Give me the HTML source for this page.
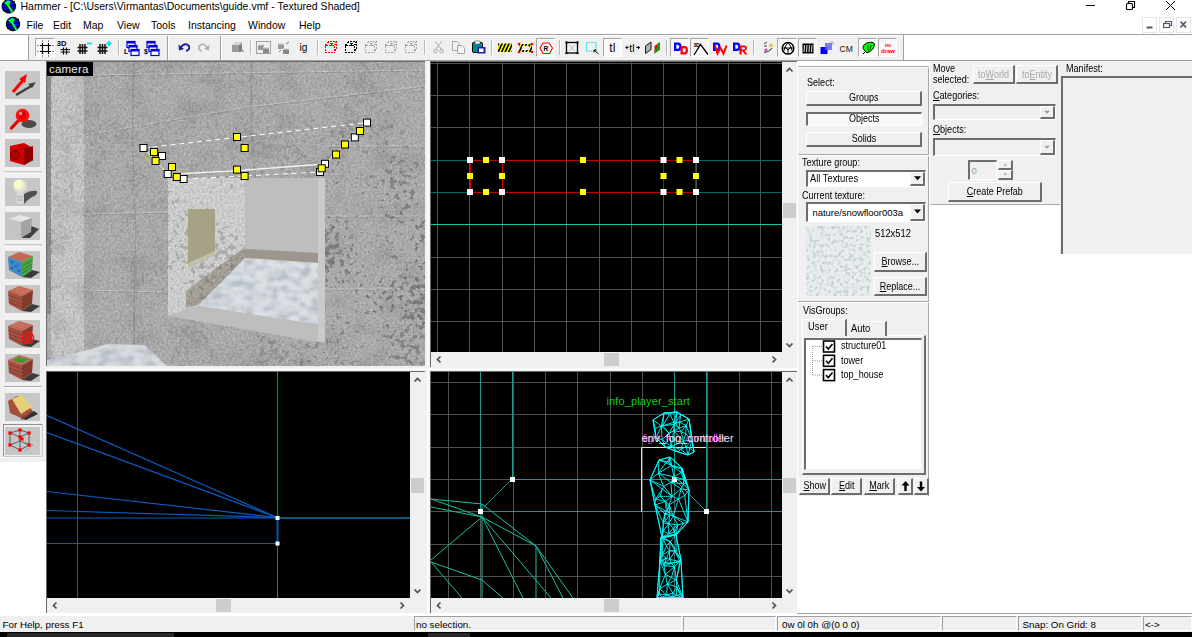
<!DOCTYPE html><html><head><meta charset="utf-8"><style>
html,body{margin:0;padding:0}
body{width:1192px;height:637px;position:relative;overflow:hidden;background:#fff;font-family:"Liberation Sans",sans-serif}
div,svg{box-sizing:border-box}
svg{overflow:visible}
u{text-decoration:underline;text-underline-offset:1px}
</style></head><body>
<div style="position:absolute;left:0px;top:0px;width:1192px;height:34px;background:#fff"></div>
<svg style="position:absolute;left:0;top:0" width="1192" height="637" viewBox="0 0 1192 637"><g transform="translate(8.8,6.3)">
<circle r="6.8" fill="#0000f0" stroke="#000" stroke-width="1"/>
<path d="M-6 -2.5 L6 -5 M-6.5 1.5 L6.5 -1.5 M-6 4.5 L6 2 M-3 6 L5 4.5" stroke="#000" stroke-width="1.1" fill="none"/>
<path d="M-5 -3.5 L-1 -6 L2 -5 L1 -2.5 L-2 -1 Z" fill="#00ff30"/>
<path d="M-1.5 -2.5 L3.5 6" stroke="#00ff30" stroke-width="2.2"/>
</g><g transform="translate(13,24)">
<circle r="6.8" fill="#0000f0" stroke="#000" stroke-width="1"/>
<path d="M-6 -2.5 L6 -5 M-6.5 1.5 L6.5 -1.5 M-6 4.5 L6 2 M-3 6 L5 4.5" stroke="#000" stroke-width="1.1" fill="none"/>
<path d="M-5 -3.5 L-1 -6 L2 -5 L1 -2.5 L-2 -1 Z" fill="#00ff30"/>
<path d="M-1.5 -2.5 L3.5 6" stroke="#00ff30" stroke-width="2.2"/>
</g></svg>
<div style="position:absolute;left:20.5px;top:1.41px;font-size:10.5px;line-height:10.5px;color:#000;white-space:pre;">Hammer - [C:\Users\Virmantas\Documents\guide.vmf - Textured Shaded]</div>
<div style="position:absolute;left:26.5px;top:19.71px;font-size:10.5px;line-height:10.5px;color:#000;white-space:pre;">File</div>
<div style="position:absolute;left:53px;top:19.71px;font-size:10.5px;line-height:10.5px;color:#000;white-space:pre;">Edit</div>
<div style="position:absolute;left:83px;top:19.71px;font-size:10.5px;line-height:10.5px;color:#000;white-space:pre;">Map</div>
<div style="position:absolute;left:117px;top:19.71px;font-size:10.5px;line-height:10.5px;color:#000;white-space:pre;">View</div>
<div style="position:absolute;left:151px;top:19.71px;font-size:10.5px;line-height:10.5px;color:#000;white-space:pre;">Tools</div>
<div style="position:absolute;left:188px;top:19.71px;font-size:10.5px;line-height:10.5px;color:#000;white-space:pre;">Instancing</div>
<div style="position:absolute;left:248px;top:19.71px;font-size:10.5px;line-height:10.5px;color:#000;white-space:pre;">Window</div>
<div style="position:absolute;left:299px;top:19.71px;font-size:10.5px;line-height:10.5px;color:#000;white-space:pre;">Help</div>
<svg style="position:absolute;left:0;top:0" width="1192" height="637" viewBox="0 0 1192 637"><path d="M1086 5.5 H1095" stroke="#000" stroke-width="1"/><rect x="1126.5" y="3.5" width="6" height="6" fill="none" stroke="#000" stroke-width="1.1" rx="1"/><path d="M1128.5 3.5 V1.5 H1134.5 V7.5 H1132.5" fill="none" stroke="#000" stroke-width="1.1"/><path d="M1166 1 L1175 10 M1175 1 L1166 10" stroke="#000" stroke-width="1"/></svg>
<div style="position:absolute;left:1142px;top:17px;width:15px;height:16px;border:1px solid #e6e6e6;background:#fff"></div>
<div style="position:absolute;left:1159px;top:17px;width:15px;height:16px;border:1px solid #e6e6e6;background:#fff"></div>
<div style="position:absolute;left:1176px;top:17px;width:15px;height:16px;border:1px solid #e6e6e6;background:#fff"></div>
<svg style="position:absolute;left:0;top:0" width="1192" height="637" viewBox="0 0 1192 637"><path d="M1146.5 27.5 H1152.5" stroke="#4d5b6e" stroke-width="2"/><rect x="1163.5" y="23.5" width="6" height="4" fill="none" stroke="#4d5b6e" stroke-width="1.2"/><path d="M1165.5 23.5 V21.5 H1171.5 V25.5 H1169.5" fill="none" stroke="#4d5b6e" stroke-width="1.2"/><path d="M1180.5 21.5 L1186 27.5 M1186 21.5 L1180.5 27.5" stroke="#4d5b6e" stroke-width="1.8"/></svg>
<div style="position:absolute;left:0px;top:34px;width:1192px;height:1px;background:#a0a0a0"></div>
<div style="position:absolute;left:28px;top:35px;width:1px;height:25px;background:#a0a0a0"></div>
<div style="position:absolute;left:29px;top:36px;width:874px;height:24px;background:#f0f0f0"></div>
<div style="position:absolute;left:903px;top:35px;width:1px;height:25px;background:#a0a0a0"></div>
<div style="position:absolute;left:0px;top:60px;width:1192px;height:1px;background:#a0a0a0"></div>
<div style="position:absolute;left:35px;top:38px;width:19.5px;height:19px;background:#f8f8f8;border-top:1px solid #a8a8a8;border-left:1px solid #a8a8a8;border-right:1px solid #fff;border-bottom:1px solid #fff"></div>
<div style="position:absolute;left:536px;top:38px;width:19px;height:19px;background:#f8f8f8;border-top:1px solid #a8a8a8;border-left:1px solid #a8a8a8;border-right:1px solid #fff;border-bottom:1px solid #fff"></div>
<div style="position:absolute;left:603px;top:38px;width:19px;height:19px;background:#f8f8f8;border-top:1px solid #a8a8a8;border-left:1px solid #a8a8a8;border-right:1px solid #fff;border-bottom:1px solid #fff"></div>
<div style="position:absolute;left:670px;top:38px;width:19px;height:19px;background:#f8f8f8;border-top:1px solid #a8a8a8;border-left:1px solid #a8a8a8;border-right:1px solid #fff;border-bottom:1px solid #fff"></div>
<div style="position:absolute;left:690px;top:38px;width:19px;height:19px;background:#f8f8f8;border-top:1px solid #a8a8a8;border-left:1px solid #a8a8a8;border-right:1px solid #fff;border-bottom:1px solid #fff"></div>
<div style="position:absolute;left:777px;top:38px;width:19.5px;height:19px;background:#f8f8f8;border-top:1px solid #a8a8a8;border-left:1px solid #a8a8a8;border-right:1px solid #fff;border-bottom:1px solid #fff"></div>
<div style="position:absolute;left:798px;top:38px;width:19px;height:19px;background:#f8f8f8;border-top:1px solid #a8a8a8;border-left:1px solid #a8a8a8;border-right:1px solid #fff;border-bottom:1px solid #fff"></div>
<div style="position:absolute;left:858px;top:38px;width:19px;height:19px;background:#f8f8f8;border-top:1px solid #a8a8a8;border-left:1px solid #a8a8a8;border-right:1px solid #fff;border-bottom:1px solid #fff"></div>
<div style="position:absolute;left:878px;top:38px;width:19px;height:19px;background:#f8f8f8;border-top:1px solid #a8a8a8;border-left:1px solid #a8a8a8;border-right:1px solid #fff;border-bottom:1px solid #fff"></div>
<div style="position:absolute;left:117.5px;top:40px;width:2px;height:15px;background:#b8b8b8;border-right:1px solid #fff"></div>
<div style="position:absolute;left:249.5px;top:40px;width:2px;height:15px;background:#b8b8b8;border-right:1px solid #fff"></div>
<div style="position:absolute;left:316.5px;top:40px;width:2px;height:15px;background:#b8b8b8;border-right:1px solid #fff"></div>
<div style="position:absolute;left:424.0px;top:40px;width:2px;height:15px;background:#b8b8b8;border-right:1px solid #fff"></div>
<div style="position:absolute;left:491.0px;top:40px;width:2px;height:15px;background:#b8b8b8;border-right:1px solid #fff"></div>
<div style="position:absolute;left:558.5px;top:40px;width:2px;height:15px;background:#b8b8b8;border-right:1px solid #fff"></div>
<div style="position:absolute;left:666.0px;top:40px;width:2px;height:15px;background:#b8b8b8;border-right:1px solid #fff"></div>
<div style="position:absolute;left:753.0px;top:40px;width:2px;height:15px;background:#b8b8b8;border-right:1px solid #fff"></div>
<div style="position:absolute;left:167.0px;top:36px;width:1px;height:24px;background:#a0a0a0"></div>
<div style="position:absolute;left:168.0px;top:36px;width:1px;height:24px;background:#fff"></div>
<div style="position:absolute;left:220.0px;top:36px;width:1px;height:24px;background:#a0a0a0"></div>
<div style="position:absolute;left:221.0px;top:36px;width:1px;height:24px;background:#fff"></div>
<svg style="position:absolute;left:0;top:0" width="1192" height="637" viewBox="0 0 1192 637"><g stroke="#000" stroke-width="1.2"><path d="M40 45.5 H51 M40 51.5 H51 M42.5 43 V54 M48.5 43 V54"/></g><g fill="#222"><rect x="42" y="40.5" width="1" height="1"/><rect x="48" y="40.5" width="1" height="1"/><rect x="42" y="55.5" width="1" height="1"/><rect x="48" y="55.5" width="1" height="1"/><rect x="37.5" y="45" width="1" height="1"/><rect x="37.5" y="51" width="1" height="1"/><rect x="52.5" y="45" width="1" height="1"/><rect x="52.5" y="51" width="1" height="1"/></g><text x="56.8" y="46.2" font-family="Liberation Sans" font-weight="bold" font-size="7.6" fill="#000" style="-webkit-font-smoothing:antialiased">3D</text><g stroke="#111" stroke-width="1.2"><path d="M60.5 49.5 H70 M60.5 52 H70 M63.5 47.5 V54.5 M66.5 47.5 V54.5"/></g><g stroke="#111" stroke-width="1.5"><path d="M77.5 47.5 H87.5 M77.5 51 H87.5 M80.0 44 V54 M82.5 44 V54 M85.0 44 V54"/></g><g stroke="#111" stroke-width="1.5"><path d="M97.5 47.5 H107.5 M97.5 51 H107.5 M100.0 44 V54 M102.5 44 V54 M105.0 44 V54"/></g><path d="M87 43.5 H92" stroke="#00e8f0" stroke-width="2"/><path d="M106.5 43.5 H111.5 M109 41 V46" stroke="#00e8f0" stroke-width="2"/><rect x="127" y="41.5" width="8" height="6" fill="#fff" stroke="#0000e0" stroke-width="1.2"/><rect x="127" y="41.5" width="8" height="2" fill="#0000e0"/><rect x="129" y="45.5" width="8" height="6" fill="#fff" stroke="#0000e0" stroke-width="1.2"/><rect x="129" y="45.5" width="8" height="2" fill="#0000e0"/><rect x="131" y="49.5" width="8" height="6" fill="#fff" stroke="#0000e0" stroke-width="1.2"/><rect x="131" y="49.5" width="8" height="2" fill="#0000e0"/><text x="124" y="54" font-family="Liberation Sans" font-weight="bold" font-size="7" fill="#000">L</text><rect x="147" y="41.5" width="8" height="6" fill="#fff" stroke="#0000e0" stroke-width="1.2"/><rect x="147" y="41.5" width="8" height="2" fill="#0000e0"/><rect x="149" y="45.5" width="8" height="6" fill="#fff" stroke="#0000e0" stroke-width="1.2"/><rect x="149" y="45.5" width="8" height="2" fill="#0000e0"/><rect x="151" y="49.5" width="8" height="6" fill="#fff" stroke="#0000e0" stroke-width="1.2"/><rect x="151" y="49.5" width="8" height="2" fill="#0000e0"/><text x="144" y="54" font-family="Liberation Sans" font-weight="bold" font-size="7" fill="#000">$</text><path d="M181 47 Q185 42 189 46 Q190 50 186 51" fill="none" stroke="#1a1aa0" stroke-width="1.8"/><path d="M178.5 44.5 L179 50.5 L184 49 Z" fill="#1a1aa0"/><path d="M207 47 Q203 42 199 46 Q198 50 202 51" fill="none" stroke="#b0b0b0" stroke-width="1.6"/><path d="M209.5 44.5 L209 50.5 L204 49 Z" fill="#b0b0b0"/><path d="M232 45 L235 42.5 H242 V50 L239 52 H232 Z" fill="#9a9a9a"/><path d="M232 45 L235 42.5 H242 L239 45 Z" fill="#d8d8d8"/><path d="M239 45 H242 V50 L239 52Z" fill="#7a7a7a"/><path d="M240 51 H244" stroke="#666"/><rect x="256.5" y="41.5" width="14" height="12" fill="none" stroke="#555" stroke-dasharray="1 1"/><rect x="258" y="44" width="6" height="6" fill="#999"/><rect x="263" y="47" width="6" height="6" fill="#888"/><rect x="258" y="44" width="6" height="1.5" fill="#ddd"/><rect x="263" y="47" width="6" height="1.5" fill="#ddd"/><rect x="278" y="43" width="6" height="6" fill="#999"/><rect x="283" y="48" width="6" height="6" fill="#888"/><rect x="278" y="43" width="6" height="1.5" fill="#ddd"/><rect x="283" y="48" width="6" height="1.5" fill="#ddd"/><path d="M286 44 L289 42 M279 52 L281 50" stroke="#777"/><text x="299.5" y="51" font-family="Liberation Sans" font-size="10" fill="#000">ig</text><g fill="none" stroke="#ff0000" stroke-width="1.3" stroke-dasharray="2 1" shape-rendering="crispEdges"><path d="M325.5 45.5 H334.5 V52.5 H325.5 Z M325.5 45.5 L328.5 41.5 H336.5 V49 L334.5 52.5 M334.5 45.5 L336.5 41.5"/><path d="M330 43.5 H333 M331.5 43.5 V46" stroke-dasharray="none"/></g><g fill="none" stroke="#000" stroke-width="1.3" stroke-dasharray="2 1" shape-rendering="crispEdges"><path d="M345.5 45.5 H354.5 V52.5 H345.5 Z M345.5 45.5 L348.5 41.5 H356.5 V49 L354.5 52.5 M354.5 45.5 L356.5 41.5"/><path d="M350 43.5 H353 M351.5 43.5 V46" stroke-dasharray="none"/></g><g fill="none" stroke="#a8a8a8" stroke-width="1.3" stroke-dasharray="2 1" shape-rendering="crispEdges"><path d="M365.5 45.5 H374.5 V52.5 H365.5 Z M365.5 45.5 L368.5 41.5 H376.5 V49 L374.5 52.5 M374.5 45.5 L376.5 41.5"/><path d="M370 43.5 H373 M371.5 43.5 V46" stroke-dasharray="none"/></g><g fill="none" stroke="#a8a8a8" stroke-width="1.3" stroke-dasharray="2 1" shape-rendering="crispEdges"><path d="M385.5 45.5 H394.5 V52.5 H385.5 Z M385.5 45.5 L388.5 41.5 H396.5 V49 L394.5 52.5 M394.5 45.5 L396.5 41.5"/><path d="M390 43.5 H393 M391.5 43.5 V46" stroke-dasharray="none"/></g><g fill="none" stroke="#a8a8a8" stroke-width="1.3" stroke-dasharray="2 1" shape-rendering="crispEdges"><path d="M405.5 45.5 H414.5 V52.5 H405.5 Z M405.5 45.5 L408.5 41.5 H416.5 V49 L414.5 52.5 M414.5 45.5 L416.5 41.5"/><path d="M410 43.5 H413 M411.5 43.5 V46" stroke-dasharray="none"/></g><g fill="none" stroke="#a8a8a8" stroke-width="1"><path d="M435 41 L441 49 M442 41 L436 49"/><circle cx="435.5" cy="51" r="1.8"/><circle cx="441.5" cy="51" r="1.8"/></g><g fill="#f4f4f4" stroke="#a8a8a8" stroke-width="1"><path d="M452.5 41.5 H457 L459 43.5 V50.5 H452.5 Z"/><path d="M457.5 45.5 H462 L464.5 48 V53.5 H457.5 Z"/></g><rect x="472.5" y="42.5" width="10" height="10" rx="1" fill="#008890" stroke="#000" stroke-width="1"/><rect x="475" y="41" width="5" height="3" fill="#fff" stroke="#555" stroke-width="0.6"/><rect x="477.5" y="47" width="8" height="6.5" fill="#2020a0"/><rect x="479" y="48.5" width="4.5" height="3.5" fill="#fff"/><defs><pattern id="hp" width="3.5" height="9" patternUnits="userSpaceOnUse" patternTransform="skewX(-25)"><rect width="3.5" height="9" fill="#ffff00"/><rect width="1.8" height="9" fill="#000"/></pattern></defs><rect x="498" y="43.5" width="14" height="8.5" fill="url(#hp)"/><rect x="519" y="44" width="13" height="8" fill="url(#hp)"/><rect x="522" y="46" width="7" height="4" fill="#e8e8f0"/><g fill="#ff0000"><circle cx="519" cy="44" r="1.3"/><circle cx="532" cy="44" r="1.3"/><circle cx="519" cy="52" r="1.3"/><circle cx="532" cy="52" r="1.3"/></g><path d="M543 43 L549 43 L552.5 48 L549.5 53.5 L543 53.5 L540 48 Z" fill="none" stroke="#ff0000" stroke-width="1.1"/><text x="543.5" y="51.3" font-family="Liberation Sans" font-weight="bold" font-size="6.5" fill="#000">R</text><rect x="566.5" y="42.5" width="11" height="10.5" fill="none" stroke="#000" stroke-width="1.3"/><path d="M569 45 L575 51 M575 45 L569 51" stroke="#c0c0c0"/><g fill="#000"><circle cx="566.5" cy="42.5" r="1.2"/><circle cx="577.5" cy="42.5" r="1.2"/><circle cx="566.5" cy="53" r="1.2"/><circle cx="577.5" cy="53" r="1.2"/></g><rect x="586.5" y="42.5" width="9.5" height="8.5" fill="none" stroke="#00e0f0" stroke-width="1.2" stroke-dasharray="1.2 0.8"/><path d="M594 50 L598.5 54 M594 50 V52.5 M594 50 H596.5" stroke="#000" stroke-width="1"/><text x="609.3" y="52.3" font-family="Liberation Sans" font-size="12" fill="#000">tl</text><text x="629.3" y="51.8" font-family="Liberation Sans" font-size="10.5" fill="#000">tl</text><path d="M628.5 47.5 H625.8 M625.8 47.5 L627.5 45.8 M625.8 47.5 L627.5 49.2 M636.3 47.5 H639.5 M639.5 47.5 L637.8 45.8 M639.5 47.5 L637.8 49.2" stroke="#000" stroke-width="1"/><path d="M645.5 46 L651 42 V49.5 L645.5 53.5 Z" fill="#b0b0b0" stroke="#000" stroke-width="0.9"/><path d="M654.5 46 L660 42 V49.5 L654.5 53.5 Z" fill="#ff0000"/><path d="M654.5 50 L660 46 V49.5 L654.5 53.5 Z M657 44.2 L660 42 V46 L657 48 Z" fill="#10a010"/><path d="M674 42.5 H678.125 Q681.5 42.5 681.5 46.75 Q681.5 51.0 678.125 51.0 H674 Z M676.3 44.7 V48.8 H677.75 Q679.3 48.8 679.3 46.75 Q679.3 44.7 677.75 44.7 Z" fill="#0000ff" fill-rule="evenodd"/><path d="M680.5 46 H684.625 Q688.0 46 688.0 50.25 Q688.0 54.5 684.625 54.5 H680.5 Z M682.8 48.2 V52.3 H684.25 Q685.8 52.3 685.8 50.25 Q685.8 48.2 684.25 48.2 Z" fill="#ff0000" fill-rule="evenodd"/><text x="693.5" y="46.5" font-family="Liberation Sans" font-weight="bold" font-size="5" fill="#000" textLength="6">3D</text><path d="M694 55 L700.5 44.5 L708 54.5" fill="none" stroke="#000" stroke-width="1.3"/><path d="M713 42.5 H717.125 Q720.5 42.5 720.5 46.75 Q720.5 51.0 717.125 51.0 H713 Z M715.3 44.7 V48.8 H716.75 Q718.3 48.8 718.3 46.75 Q718.3 44.7 716.75 44.7 Z" fill="#0000ff" fill-rule="evenodd"/><path d="M715 45.5 L717.5 53.5 L720.5 48 L723.5 53.5 L726.5 45.5" fill="none" stroke="#ff0000" stroke-width="2"/><path d="M733 42.5 H737.125 Q740.5 42.5 740.5 46.75 Q740.5 51.0 737.125 51.0 H733 Z M735.3 44.7 V48.8 H736.75 Q738.3 48.8 738.3 46.75 Q738.3 44.7 736.75 44.7 Z" fill="#0000ff" fill-rule="evenodd"/><path d="M739.5 45.5 H744 Q747 45.5 747 48.3 Q747 50.5 744.5 51 L747.5 54.5 H745 L742.5 51.3 H741.7 V54.5 H739.5 Z M741.7 47.3 V49.6 H743.8 Q745 49.6 745 48.4 Q745 47.3 743.8 47.3 Z" fill="#ff0000" fill-rule="evenodd"/><path d="M764 52 Q768 53 772 48" fill="none" stroke="#444" stroke-width="1.2"/><circle cx="771" cy="45.5" r="1.8" fill="#e0c040"/><circle cx="766" cy="50" r="1.5" fill="#c040c0"/><path d="M764 44 L767 42 M764 46 H767" stroke="#444"/><circle cx="788" cy="48.3" r="5.8" fill="#fff" stroke="#000" stroke-width="1.4"/><path d="M782.5 48 H793.5 M788 42.5 L785 47 L788 50 L791 47 Z M785 47 L783.5 52 M791 47 L792.5 52 M788 50 V54" fill="none" stroke="#000" stroke-width="1"/><rect x="802.5" y="43.5" width="11" height="10" fill="#000"/><path d="M804.5 45 L804 52 M807 45 L806.5 52 M809.5 45 L809 52 M812 45 L811.5 52" stroke="#fff" stroke-width="0.9"/><rect x="820.5" y="47" width="7" height="7" fill="#0000ff"/><rect x="825" y="43" width="7" height="7" fill="#6060ff" opacity="0.8"/><path d="M830 42 H833 V45" stroke="#aaa" fill="none"/><text x="839.5" y="51.5" font-family="Liberation Sans" font-size="8.5" fill="#111">CM</text><path d="M863 54 L866 51 M865 51 Q860 46 867 43 Q873 41 874.5 44 Q874 50 868 52.5 Q866 53 865 51 Z" fill="#00ff00" stroke="#000" stroke-width="1"/><path d="M868 45 V51 M871 45 L870 50" stroke="#000" stroke-width="0.7"/><text x="885" y="47" font-family="Liberation Sans" font-weight="bold" font-size="5" fill="#ff0000">no</text><text x="881" y="53" font-family="Liberation Sans" font-weight="bold" font-size="6" fill="#ff0000">draw</text></svg>
<div style="position:absolute;left:0px;top:61px;width:46px;height:401px;background:#f0f0f0"></div>
<div style="position:absolute;left:46px;top:61px;width:1px;height:401px;background:#fff"></div>
<svg style="position:absolute;left:0;top:0" width="1192" height="637" viewBox="0 0 1192 637"><rect x="5" y="71" width="35" height="28" fill="#c6c6c6"/><rect x="5" y="105" width="35" height="28" fill="#c6c6c6"/><rect x="5" y="139" width="35" height="28" fill="#c6c6c6"/><rect x="5" y="178" width="35" height="28" fill="#c6c6c6"/><rect x="5" y="212" width="35" height="28" fill="#c6c6c6"/><rect x="5" y="251" width="35" height="28" fill="#c6c6c6"/><rect x="5" y="285" width="35" height="28" fill="#c6c6c6"/><rect x="5" y="320" width="35" height="28" fill="#c6c6c6"/><rect x="5" y="354" width="35" height="28" fill="#c6c6c6"/><rect x="5" y="393" width="35" height="28" fill="#c6c6c6"/><rect x="5" y="427" width="35" height="28" fill="#c6c6c6"/><path d="M4 172 H42" stroke="#a8a8a8" stroke-width="1"/><path d="M4 173 H42" stroke="#fff" stroke-width="1"/><path d="M4 245 H42" stroke="#a8a8a8" stroke-width="1"/><path d="M4 246 H42" stroke="#fff" stroke-width="1"/><path d="M4 386.5 H42" stroke="#a8a8a8" stroke-width="1"/><path d="M4 387.5 H42" stroke="#fff" stroke-width="1"/><rect x="3.5" y="424.5" width="39" height="32" fill="none" stroke="#909090" stroke-width="1"/><path d="M3 457 H43 V424" stroke="#fff" fill="none"/><path d="M16 95 L33 85" stroke="#404040" stroke-width="2.5"/><path d="M36 82 L28 84 L32 88 Z" fill="#404040"/><path d="M13 92 L24 79" stroke="#ff0000" stroke-width="3"/><path d="M27 74 L19 79 L25 83 Z" fill="#ff0000"/><ellipse cx="29" cy="124" rx="7.5" ry="4" fill="#4a4a4a"/><path d="M19 120 L11.5 128" stroke="#e00000" stroke-width="3.2" stroke-linecap="round"/><circle cx="22.5" cy="115.5" r="6.8" fill="#ff1010"/><circle cx="22.5" cy="115.5" r="4" fill="#e00000"/><circle cx="20.5" cy="113.5" r="1.8" fill="#ff9090"/><path d="M24 165 L34 160 L26 155 Z" fill="#404040"/><path d="M10 146 L24 143 L33 148 V159 L24 165 L10 161 Z" fill="#d00000"/><path d="M24 149 L33 146 V159 L24 165 Z" fill="#900000"/><circle cx="15" cy="155" r="4.5" fill="#b00000" stroke="#700000"/><path d="M24 194 Q30 190 37 191 Q38 195 32 197 Q27 200 24 204 Z" fill="#505050"/><path d="M16 190 L24 190 L23 196 Q25 199 23 204 L17 204 Q15 199 17 196 Z" fill="#d8d8d8"/><path d="M17 197 H23 M17 200 H23" stroke="#a0a0a0" stroke-width="0.8"/><circle cx="20" cy="186" r="6.8" fill="#e0e0d8"/><circle cx="18.5" cy="184.5" r="4.8" fill="#fafac8"/><path d="M22 238 L31 226 L39 229 L30 238 Z" fill="#404040"/><path d="M9 219 L20 215 L32 218 L21 222 Z" fill="#e6e6e6"/><path d="M9 219 L21 222 L21 238 L10 233 Z" fill="#c4c4c4"/><path d="M21 222 L32 218 L31 232 L21 238 Z" fill="#a4a4a4"/><path d="M22 277 L32 270 L40 272 L31 278 Z" fill="#3a3a3a"/><path d="M8 257 L19 252 L33 256 L22 262 Z" fill="#c46a54"/><path d="M8 257 L22 262 L22 277 L9 270 Z" fill="#3a88c8"/><path d="M22 262 L33 256 L32 270 L22 277 Z" fill="#48a848"/><g fill="#183050" opacity="0.6"><circle cx="12" cy="262" r="1"/><circle cx="16" cy="266" r="1"/><circle cx="12" cy="268" r="1"/><circle cx="19" cy="271" r="1"/></g><g stroke="#206020" stroke-width="0.6"><path d="M22 266 L32.8 260 M22 270 L32.5 264 M22 273.5 L32.2 267"/></g><path d="M22 311 L32 304 L40 306 L31 312 Z" fill="#3a3a3a"/><path d="M8 291 L19 286 L33 290 L22 296 Z" fill="#c46a54"/><path d="M8 291 L22 296 L22 311 L9 304 Z" fill="#a4503e"/><path d="M22 296 L33 290 L32 304 L22 311 Z" fill="#8a3e2e"/><g stroke="#5a2a20" stroke-width="0.6" opacity="0.7"><path d="M8.3 295 L22 300 M8.6 299 L22 304 M8.8 302 L22 307.5 M22 300 L32.8 294 M22 304 L32.5 298 M22 307.5 L32.2 301"/></g><g stroke="#e0a090" stroke-width="0.5" opacity="0.6"><path d="M12 289.5 L26 294 M16 288 L29 292"/></g><path d="M22 346 L32 339 L40 341 L31 347 Z" fill="#3a3a3a"/><path d="M8 326 L19 321 L33 325 L22 331 Z" fill="#c46a54"/><path d="M8 326 L22 331 L22 346 L9 339 Z" fill="#a4503e"/><path d="M22 331 L33 325 L32 339 L22 346 Z" fill="#8a3e2e"/><g stroke="#5a2a20" stroke-width="0.6" opacity="0.7"><path d="M8.3 330 L22 335 M8.6 334 L22 339 M8.8 337 L22 342.5 M22 335 L32.8 329 M22 339 L32.5 333 M22 342.5 L32.2 336"/></g><g stroke="#e0a090" stroke-width="0.5" opacity="0.6"><path d="M12 324.5 L26 329 M16 323 L29 327"/></g><circle cx="28" cy="338" r="5.5" fill="none" stroke="#ff1010" stroke-width="1.6"/><circle cx="28" cy="338" r="2.5" fill="none" stroke="#ff1010" stroke-width="1.4"/><path d="M22 380 L32 373 L40 375 L31 381 Z" fill="#3a3a3a"/><path d="M8 360 L19 355 L33 359 L22 365 Z" fill="#c46a54"/><path d="M8 360 L22 365 L22 380 L9 373 Z" fill="#a4503e"/><path d="M22 365 L33 359 L32 373 L22 380 Z" fill="#8a3e2e"/><g stroke="#5a2a20" stroke-width="0.6" opacity="0.7"><path d="M8.3 364 L22 369 M8.6 368 L22 373 M8.8 371 L22 376.5 M22 369 L32.8 363 M22 373 L32.5 367 M22 376.5 L32.2 370"/></g><g stroke="#e0a090" stroke-width="0.5" opacity="0.6"><path d="M12 358.5 L26 363 M16 357 L29 361"/></g><path d="M12 360 L19 357 L29 359.5 L22 363 Z" fill="#3c9a30"/><path d="M20 418 L34 411 L38 414 L26 420 Z" fill="#303030"/><path d="M8 401 L17 396 L22 399 L32 410 L21 418 L10 413 Z" fill="#a4503e"/><path d="M21 418 L32 410 L33 412 L22 420 Z" fill="#8a3e2e"/><path d="M12 399 L22 395 L32 407 L21 414 Z" fill="#e8d078"/><g fill="none" stroke="#404040" stroke-width="0.8"><path d="M10 433 L20 430 L29 433 L20 437 Z M10 433 V445 L20 450 V437 M29 433 V445 L20 450 M10 445 L20 441 L29 445 M20 430 V441"/></g><path d="M20 441 L33 445 L25 451" fill="none" stroke="#909090" stroke-width="0.8"/><rect x="8.4" y="431.4" width="3.2" height="3.2" fill="#ff0000"/><rect x="18.4" y="428.4" width="3.2" height="3.2" fill="#ff0000"/><rect x="27.4" y="431.4" width="3.2" height="3.2" fill="#ff0000"/><rect x="18.4" y="435.4" width="3.2" height="3.2" fill="#ff0000"/><rect x="8.4" y="443.4" width="3.2" height="3.2" fill="#ff0000"/><rect x="18.4" y="448.4" width="3.2" height="3.2" fill="#ff0000"/><rect x="27.4" y="443.4" width="3.2" height="3.2" fill="#ff0000"/><rect x="20.4" y="437.4" width="3.2" height="3.2" fill="#ff0000"/></svg>
<div style="position:absolute;left:425px;top:61px;width:5px;height:556px;background:#f0f0f0"></div>
<div style="position:absolute;left:427px;top:61px;width:2px;height:556px;background:#fbfbfb"></div>
<div style="position:absolute;left:46px;top:366px;width:751px;height:5px;background:#f0f0f0"></div>
<div style="position:absolute;left:46px;top:368px;width:751px;height:2px;background:#fbfbfb"></div>
<div style="position:absolute;left:46px;top:61px;width:379px;height:305px;background:#a8a8a8;border-left:1px solid #6a6a6a;border-top:1px solid #6a6a6a"></div>
<svg style="position:absolute;left:0;top:0" width="1192" height="637" viewBox="0 0 1192 637"><defs><clipPath id="c3d"><rect x="47" y="62" width="378" height="304"/></clipPath><filter id="spk" x="0" y="0" width="100%" height="100%" color-interpolation-filters="sRGB"><feTurbulence type="fractalNoise" baseFrequency="0.2" numOctaves="3" seed="3" result="n1"/><feTurbulence type="fractalNoise" baseFrequency="0.018" numOctaves="2" seed="11" result="n2"/><feComposite in="n1" in2="n2" operator="arithmetic" k1="0" k2="-10" k3="6" k4="0.9" result="m"/><feColorMatrix in="m" values="0 0 0 0 0.3  0 0 0 0 0.3  0 0 0 0 0.3  0 0 0 1 0"/><feGaussianBlur stdDeviation="0.55"/><feComposite in2="SourceGraphic" operator="in"/></filter><filter id="blt" x="0" y="0" width="100%" height="100%" color-interpolation-filters="sRGB"><feTurbulence type="fractalNoise" baseFrequency="0.04" numOctaves="3" seed="21"/><feColorMatrix values="0 0 0 0 0  0 0 0 0 0  0 0 0 0 0  0 0 0 -3 1.6"/><feComposite in2="SourceGraphic" operator="in"/></filter><radialGradient id="spg" gradientUnits="userSpaceOnUse" cx="385" cy="270" r="170"><stop offset="0" stop-color="#fff"/><stop offset="0.55" stop-color="#bbb"/><stop offset="1" stop-color="#333"/></radialGradient><mask id="spm" maskUnits="userSpaceOnUse" x="47" y="62" width="378" height="304"><rect x="47" y="62" width="378" height="304" fill="url(#spg)"/></mask><filter id="grn" x="0" y="0" width="100%" height="100%" color-interpolation-filters="sRGB"><feTurbulence type="fractalNoise" baseFrequency="0.45" numOctaves="2" seed="9"/><feColorMatrix values="2 0 0 0 -0.5  2 0 0 0 -0.5  2 0 0 0 -0.5  0 0 0 0 0.12"/><feComposite in2="SourceGraphic" operator="in"/></filter><filter id="snf" x="0" y="0" width="100%" height="100%" color-interpolation-filters="sRGB"><feTurbulence type="fractalNoise" baseFrequency="0.09 0.16" numOctaves="3" seed="4"/><feColorMatrix values="0 0 0 0 0.35  0 0 0 0 0.42  0 0 0 0 0.5  0 0 0 -3 1.8"/><feGaussianBlur stdDeviation="0.9"/><feComposite in2="SourceGraphic" operator="in"/></filter></defs><g clip-path="url(#c3d)"><rect x="47" y="62" width="378" height="304" fill="#b1b1b1"/><rect x="47" y="62" width="4" height="252" fill="#909090"/><rect x="47" y="314" width="4" height="52" fill="#b4b4b4"/><rect x="51" y="62" width="33" height="304" fill="#cdcdcd"/><g stroke="#8c8c8c" stroke-width="1" fill="none" opacity="0.6" transform="translate(0,1)"><path d="M84 135 L247 107 L425 86"/><path d="M84 214 L168 212"/><path d="M84 290 L168 292"/><path d="M323 146 L425 146"/><path d="M323 216 L425 216"/><path d="M323 289 L425 289"/><path d="M84 75 L425 70"/></g><g stroke="#cacaca" stroke-width="1" fill="none"><path d="M84 135 L247 107 L425 86"/><path d="M84 214 L168 212"/><path d="M84 290 L168 292"/><path d="M323 146 L425 146"/><path d="M323 216 L425 216"/><path d="M323 289 L425 289"/><path d="M84 75 L425 70"/></g><g stroke="#cacaca" stroke-width="1" fill="none"><path d="M51 95 H84 M51 148 H84 M51 205 H84 M51 283 H84 M51 340 H84"/></g><g mask="url(#spm)"><rect x="84" y="62" width="341" height="304" fill="#606060" filter="url(#spk)" opacity="0.55"/></g><rect x="51" y="62" width="33" height="304" fill="#909090" filter="url(#spk)" opacity="0.12"/><path d="M134 62 Q131 150 136 230 Q133 300 135 366" stroke="#8a8a8a" stroke-width="1.2" fill="none" opacity="0.6"/><path d="M252 62 Q249 120 256 180" stroke="#8a8a8a" stroke-width="1.5" fill="none" opacity="0.5"/><rect x="47" y="62" width="378" height="304" fill="#808080" filter="url(#blt)" opacity="0.08"/><rect x="47" y="62" width="378" height="304" fill="#808080" filter="url(#grn)"/><path d="M168 178 L245 178 L245 258 L198 306 L168 316 Z" fill="#d6d6d6"/><rect x="245" y="178" width="78" height="80" fill="#bebebe"/><path d="M245 249 L320 253 L320 264 L245 260 Z" fill="#9c968c"/><path d="M186 291 L245 247 L245 259 L198 305 L186 308 Z" fill="#aaa49a"/><path d="M168 178 L245 178 L245 258 L198 306 L168 316 Z" fill="#808080" filter="url(#grn)"/><path d="M168 178 L245 178 L245 258 L198 306 L168 316 Z" fill="#606060" filter="url(#spk)" opacity="0.25"/><path d="M188 209 L215 209 L215 255 L188 268 Z" fill="#a6a286"/><path d="M188 263 L215 251 L215 255 L188 268 Z" fill="#c4c0a8"/><path d="M198 306 L245 258 L320 263 L320 325 Z" fill="#dde1e5"/><path d="M198 306 L245 258 L320 263 L320 325 Z" fill="#8090a0" filter="url(#snf)" opacity="0.3"/><path d="M168 316 L198 306 L320 325 L323 343 Z" fill="#bebebe"/><path d="M318 178 L325 178 L325 343 L318 340 Z" fill="#cacaca"/><path d="M47 366 L47 360 L80 352 L108 344 L145 345 L167 366 Z" fill="#d8dce0"/><path d="M47 366 L47 360 L80 352 L108 344 L145 345 L167 366 Z" fill="#8090a0" filter="url(#snf)" opacity="0.3"/></g><path d="M143.5 148 L367 122.6" stroke="#fff" stroke-width="1" stroke-dasharray="5 4"/><path d="M184 179 L244 176 L320 172" stroke="#fff" stroke-width="1" stroke-dasharray="5 4"/><path d="M168 174.5 L237 170.5 L325 164" stroke="#f4f4f4" stroke-width="1.7"/><path d="M143.5 148 L168 174 M367 122.6 L325 164" stroke="#fff" stroke-width="1"/><rect x="140.0" y="144.5" width="7" height="7" fill="#fff" stroke="#000" stroke-width="1"/><rect x="158.5" y="152.5" width="7" height="7" fill="#fff" stroke="#000" stroke-width="1"/><rect x="164.2" y="170.5" width="7" height="7" fill="#fff" stroke="#000" stroke-width="1"/><rect x="180.1" y="175.5" width="7" height="7" fill="#fff" stroke="#000" stroke-width="1"/><rect x="363.5" y="119.1" width="7" height="7" fill="#fff" stroke="#000" stroke-width="1"/><rect x="351.3" y="133.9" width="7" height="7" fill="#fff" stroke="#000" stroke-width="1"/><rect x="321.5" y="160.3" width="7" height="7" fill="#fff" stroke="#000" stroke-width="1"/><rect x="316.5" y="168.5" width="7" height="7" fill="#fff" stroke="#000" stroke-width="1"/><rect x="150.5" y="148.5" width="7" height="7" fill="#ffff00" stroke="#000" stroke-width="1"/><rect x="152.1" y="157.5" width="7" height="7" fill="#ffff00" stroke="#000" stroke-width="1"/><rect x="168.5" y="163.5" width="7" height="7" fill="#ffff00" stroke="#000" stroke-width="1"/><rect x="173.3" y="173.5" width="7" height="7" fill="#ffff00" stroke="#000" stroke-width="1"/><rect x="233.5" y="133.5" width="7" height="7" fill="#ffff00" stroke="#000" stroke-width="1"/><rect x="241.1" y="144.5" width="7" height="7" fill="#ffff00" stroke="#000" stroke-width="1"/><rect x="233.5" y="166.1" width="7" height="7" fill="#ffff00" stroke="#000" stroke-width="1"/><rect x="241.1" y="172.5" width="7" height="7" fill="#ffff00" stroke="#000" stroke-width="1"/><rect x="356.5" y="127.5" width="7" height="7" fill="#ffff00" stroke="#000" stroke-width="1"/><rect x="341.5" y="141.0" width="7" height="7" fill="#ffff00" stroke="#000" stroke-width="1"/><rect x="332.5" y="151.0" width="7" height="7" fill="#ffff00" stroke="#000" stroke-width="1"/><rect x="318.2" y="164.8" width="7" height="7" fill="#ffff00" stroke="#000" stroke-width="1"/></svg>
<div style="position:absolute;left:47px;top:62px;width:46px;height:14px;background:#000"></div>
<div style="position:absolute;left:49px;top:63.48px;font-size:11.6px;line-height:11.6px;color:#e8e8e8;white-space:pre;letter-spacing:0.15px">camera</div>
<div style="position:absolute;left:430px;top:61px;width:367px;height:306px;background:#000;border-left:1px solid #6a6a6a;border-top:1px solid #6a6a6a"></div>
<svg style="position:absolute;left:0;top:0" width="1192" height="637" viewBox="0 0 1192 637"><path d="M437.5 62 V352" stroke="#505050" stroke-width="1"/><path d="M469.5 62 V352" stroke="#505050" stroke-width="1"/><path d="M502.5 62 V352" stroke="#505050" stroke-width="1"/><path d="M534.5 62 V352" stroke="#505050" stroke-width="1"/><path d="M566.5 62 V352" stroke="#505050" stroke-width="1"/><path d="M599.5 62 V352" stroke="#505050" stroke-width="1"/><path d="M631.5 62 V352" stroke="#505050" stroke-width="1"/><path d="M663.5 62 V352" stroke="#505050" stroke-width="1"/><path d="M696.5 62 V352" stroke="#505050" stroke-width="1"/><path d="M728.5 62 V352" stroke="#505050" stroke-width="1"/><path d="M760.5 62 V352" stroke="#505050" stroke-width="1"/><path d="M431 63.5 H782" stroke="#505050" stroke-width="1"/><path d="M431 95.5 H782" stroke="#505050" stroke-width="1"/><path d="M431 127.5 H782" stroke="#505050" stroke-width="1"/><path d="M431 160.5 H782" stroke="#505050" stroke-width="1"/><path d="M431 192.5 H782" stroke="#505050" stroke-width="1"/><path d="M431 224.5 H782" stroke="#505050" stroke-width="1"/><path d="M431 257.5 H782" stroke="#505050" stroke-width="1"/><path d="M431 289.5 H782" stroke="#505050" stroke-width="1"/><path d="M431 321.5 H782" stroke="#505050" stroke-width="1"/><path d="M431 160.5 H782 M431 192.5 H782" stroke="#006868" stroke-width="1"/><path d="M431 224.5 H782" stroke="#20c0b0" stroke-width="1"/><path d="M470 160.5 H696 M470 192.5 H696 M470.5 160 V192 M502.5 160 V192 M663.5 160 V192 M695.5 160 V192" stroke="#c00000" stroke-width="1"/><rect x="467" y="157" width="6" height="6" fill="#fff"/><rect x="467" y="189" width="6" height="6" fill="#fff"/><rect x="499" y="157" width="6" height="6" fill="#fff"/><rect x="499" y="189" width="6" height="6" fill="#fff"/><rect x="660.5" y="157" width="6" height="6" fill="#fff"/><rect x="660.5" y="189" width="6" height="6" fill="#fff"/><rect x="693" y="157" width="6" height="6" fill="#fff"/><rect x="693" y="189" width="6" height="6" fill="#fff"/><rect x="483" y="157" width="6" height="6" fill="#ffff00"/><rect x="483" y="189" width="6" height="6" fill="#ffff00"/><rect x="580" y="157" width="6" height="6" fill="#ffff00"/><rect x="580" y="189" width="6" height="6" fill="#ffff00"/><rect x="676.5" y="157" width="6" height="6" fill="#ffff00"/><rect x="676.5" y="189" width="6" height="6" fill="#ffff00"/><rect x="467" y="173" width="6" height="6" fill="#ffff00"/><rect x="499" y="173" width="6" height="6" fill="#ffff00"/><rect x="660.5" y="173" width="6" height="6" fill="#ffff00"/><rect x="693" y="173" width="6" height="6" fill="#ffff00"/></svg>
<div style="position:absolute;left:782px;top:62px;width:15px;height:290px;background:#f0f0f0"></div>
<div style="position:absolute;left:783px;top:202.5px;width:13px;height:15px;background:#cdcdcd"></div>
<svg style="position:absolute;left:0;top:0" width="1192" height="637" viewBox="0 0 1192 637"><path d="M786.5 71.5 L789.5 68.5 L792.5 71.5" fill="none" stroke="#505050" stroke-width="1.7"/><path d="M786.5 343.5 L789.5 346.5 L792.5 343.5" fill="none" stroke="#505050" stroke-width="1.7"/></svg>
<div style="position:absolute;left:431px;top:352px;width:351px;height:15px;background:#f0f0f0"></div>
<div style="position:absolute;left:604px;top:353px;width:15px;height:13px;background:#cdcdcd"></div>
<svg style="position:absolute;left:0;top:0" width="1192" height="637" viewBox="0 0 1192 637"><path d="M440.5 356.5 L437.5 359.5 L440.5 362.5" fill="none" stroke="#505050" stroke-width="1.7"/><path d="M772.5 356.5 L775.5 359.5 L772.5 362.5" fill="none" stroke="#505050" stroke-width="1.7"/></svg>
<div style="position:absolute;left:782px;top:352px;width:15px;height:15px;background:#f0f0f0"></div>
<div style="position:absolute;left:46px;top:371px;width:379px;height:242px;background:#000;border-left:1px solid #6a6a6a;border-top:1px solid #6a6a6a"></div>
<svg style="position:absolute;left:0;top:0" width="1192" height="637" viewBox="0 0 1192 637"><defs><clipPath id="cbl"><rect x="47" y="372" width="363" height="226"/></clipPath></defs><g clip-path="url(#cbl)"><path d="M77.5 372 V598" stroke="#505050"/><path d="M277.5 372 V517" stroke="#009000" stroke-width="1.3"/><path d="M277.5 543 V598" stroke="#606060"/><g stroke="#0a5cc0" stroke-width="1.2" fill="none"><path d="M47 415.5 L277 517.5"/><path d="M47 432.5 L277 517.5"/><path d="M47 491.5 L277 517.5"/><path d="M47 510.5 L277 517.5"/><path d="M47 518 H277"/><path d="M47 543.5 H277"/></g><path d="M277.5 517 V543" stroke="#0a50b8" stroke-width="2"/><path d="M277 518 H410" stroke="#0a7aa0" stroke-width="1.3"/><rect x="275.5" y="516" width="4" height="4" fill="#fff"/><rect x="275.5" y="541.5" width="4" height="4" fill="#fff"/></g></svg>
<div style="position:absolute;left:410px;top:372px;width:15px;height:226px;background:#f0f0f0"></div>
<div style="position:absolute;left:411px;top:478px;width:13px;height:15px;background:#cdcdcd"></div>
<svg style="position:absolute;left:0;top:0" width="1192" height="637" viewBox="0 0 1192 637"><path d="M414.5 381.5 L417.5 378.5 L420.5 381.5" fill="none" stroke="#505050" stroke-width="1.7"/><path d="M414.5 589.5 L417.5 592.5 L420.5 589.5" fill="none" stroke="#505050" stroke-width="1.7"/></svg>
<div style="position:absolute;left:47px;top:598px;width:363px;height:15px;background:#f0f0f0"></div>
<div style="position:absolute;left:216px;top:599px;width:15px;height:13px;background:#cdcdcd"></div>
<svg style="position:absolute;left:0;top:0" width="1192" height="637" viewBox="0 0 1192 637"><path d="M56.5 602.5 L53.5 605.5 L56.5 608.5" fill="none" stroke="#505050" stroke-width="1.7"/><path d="M400.5 602.5 L403.5 605.5 L400.5 608.5" fill="none" stroke="#505050" stroke-width="1.7"/></svg>
<div style="position:absolute;left:410px;top:598px;width:15px;height:15px;background:#f0f0f0"></div>
<div style="position:absolute;left:430px;top:371px;width:367px;height:242px;background:#000;border-left:1px solid #6a6a6a;border-top:1px solid #6a6a6a"></div>
<svg style="position:absolute;left:0;top:0" width="1192" height="637" viewBox="0 0 1192 637"><defs><clipPath id="cbr"><rect x="431" y="372" width="351" height="226"/></clipPath></defs><g clip-path="url(#cbr)"><path d="M448.5 372 V598" stroke="#505050" stroke-width="1"/><path d="M480.5 372 V598" stroke="#505050" stroke-width="1"/><path d="M513.5 372 V598" stroke="#505050" stroke-width="1"/><path d="M545.5 372 V598" stroke="#505050" stroke-width="1"/><path d="M577.5 372 V598" stroke="#505050" stroke-width="1"/><path d="M610.5 372 V598" stroke="#505050" stroke-width="1"/><path d="M642.5 372 V598" stroke="#505050" stroke-width="1"/><path d="M674.5 372 V598" stroke="#505050" stroke-width="1"/><path d="M707.5 372 V598" stroke="#505050" stroke-width="1"/><path d="M739.5 372 V598" stroke="#505050" stroke-width="1"/><path d="M771.5 372 V598" stroke="#505050" stroke-width="1"/><path d="M431 382.5 H782" stroke="#505050" stroke-width="1"/><path d="M431 414.5 H782" stroke="#505050" stroke-width="1"/><path d="M431 447.5 H782" stroke="#505050" stroke-width="1"/><path d="M431 479.5 H782" stroke="#505050" stroke-width="1"/><path d="M431 511.5 H782" stroke="#505050" stroke-width="1"/><path d="M431 544.5 H782" stroke="#505050" stroke-width="1"/><path d="M431 576.5 H782" stroke="#505050" stroke-width="1"/><path d="M480.5 372 V511 M512.5 372 V479 M674.5 372 V479 M706.5 372 V511 M512 479.5 H782 M480 511.5 H782 M512 479 L484 507 M674 479 L706 511" stroke="#1a9c94" stroke-width="1" fill="none"/><g stroke="#18c0a0" stroke-width="1" fill="none"><path d="M431 499 L482 504 L536 546 L573 598 M431 499 L482 517 L536 546 M431 507 L482 517 M482 517 L431 560 M482 517 L523 598 M482 504 V598 M536 546 V598 M536 546 L563 598 M482 517 L551 598 M431 562 L482 580 L503 598 M431 562 L462 598"/></g><rect x="510" y="477" width="5" height="5" fill="#fff"/><rect x="478" y="509" width="5" height="5" fill="#fff"/><rect x="704" y="509" width="5" height="5" fill="#fff"/><rect x="672" y="477" width="5" height="5" fill="#fff"/><path d="M641.5 512 V447.5 H706" stroke="#e0e0e0" stroke-width="1" fill="none"/><path d="M669.1 433.2L673.6 430.8M675.8 423.7L673.8 422.2M673.6 430.8L681.1 431.9M665.0 447.0L656.0 438.0M689.0 419.0L686.1 425.6M679.7 422.1L686.1 425.6M679.7 422.1L679.1 428.2M664.0 413.0L662.7 425.8M669.7 413.9L673.8 422.2M662.7 425.8L673.8 422.2M678.0 452.0L680.8 449.4M673.6 430.8L679.1 428.2M674.1 424.3L669.1 433.2M669.1 433.2L662.7 425.8M689.0 419.0L680.7 414.6M679.7 422.1L680.7 414.6M656.0 438.0L655.2 428.5M653.0 420.0L656.0 438.0M692.0 440.0L685.8 433.8M656.0 438.0L661.3 426.0M685.8 433.8L681.1 431.9M677.0 412.0L675.8 422.3M678.0 452.0L671.4 446.4M686.0 446.7L689.8 448.3M664.0 413.0L661.3 426.0M681.1 431.9L679.1 428.2M673.6 430.8L683.4 441.0M686.1 425.6L685.8 433.8M677.0 412.0L669.7 413.9M669.1 433.2L661.3 426.0M669.1 433.2L662.1 439.6M689.0 419.0L694.0 452.0M689.0 419.0L679.7 422.1M692.0 440.0L686.1 425.6M686.0 446.7L680.8 449.4M674.1 424.3L675.8 423.7M686.0 446.7L683.4 441.0M656.0 438.0L662.1 439.6M669.1 433.2L671.4 446.4M688.0 455.0L689.8 448.3M673.8 422.2L675.8 422.3M673.6 430.8L671.4 446.4M692.0 440.0L689.8 448.3M671.4 446.4L683.4 441.0M680.7 414.6L675.8 422.3M674.1 424.3L673.6 430.8M677.0 412.0L680.7 414.6M685.8 433.8L683.4 441.0M677.0 412.0L673.8 422.2M694.0 452.0L688.0 455.0M661.3 426.0L662.7 425.8M655.2 428.5L661.3 426.0M679.7 422.1L675.8 423.7M671.4 446.4L662.1 439.6M664.0 413.0L677.0 412.0M683.4 441.0L681.1 431.9M674.1 424.3L679.1 428.2M688.0 455.0L686.0 446.7M688.0 455.0L680.8 449.4M692.0 440.0L686.0 446.7M675.8 423.7L675.8 422.3M692.0 440.0L683.4 441.0M677.0 412.0L689.0 419.0M664.0 413.0L669.7 413.9M680.8 449.4L683.4 441.0M674.1 424.3L662.7 425.8M689.0 419.0L692.0 440.0M686.1 425.6L681.1 431.9M665.0 447.0L662.1 439.6M674.1 424.3L673.8 422.2M692.0 440.0L694.0 452.0M675.8 423.7L679.1 428.2M661.3 426.0L662.1 439.6M653.0 420.0L664.0 413.0M694.0 452.0L689.8 448.3M686.1 425.6L679.1 428.2M679.7 422.1L675.8 422.3M665.0 447.0L671.4 446.4M680.8 449.4L671.4 446.4M688.0 455.0L678.0 452.0M653.0 420.0L655.2 428.5M653.0 420.0L661.3 426.0M678.0 452.0L665.0 447.0M669.7 413.9L662.7 425.8M653 420L664 413L677 412L689 419L692 440L694 452L688 455L678 452L665 447L656 438Z" stroke="#00ffff" stroke-width="0.9" fill="none"/><path d="M665.6 501.3L667.7 510.4M681.0 488.9L678.5 499.0M670.9 482.3L674.0 476.9M673.2 516.0L669.1 504.8M658.3 473.3L670.9 482.3M684.7 495.4L681.0 488.9M677.8 524.8L683.5 523.3M689.0 490.0L683.5 484.0M681.1 472.5L683.7 479.3M663.6 486.3L670.9 482.3M667.4 461.6L669.3 461.0M665.6 501.3L655.5 499.2M671.6 465.5L669.3 461.0M673.9 532.3L674.6 531.8M676.0 535.0L673.9 532.3M662.4 489.2L655.5 499.2M673.9 532.3L673.4 527.9M677.8 524.8L673.2 516.0M669.7 515.0L668.6 523.7M671.6 465.5L667.4 461.6M682.0 468.0L671.6 465.5M658.3 473.3L663.6 486.3M666.3 511.4L664.7 513.5M676.0 535.0L677.8 524.8M683.5 484.0L670.9 482.3M677.8 524.8L668.6 523.7M667.7 510.4L669.6 512.3M655.0 505.0L655.5 499.2M665.2 520.8L663.3 522.9M664.8 514.1L664.7 513.5M682.1 469.6L683.7 479.3M665.8 462.9L671.6 465.5M689.0 490.0L686.0 483.2M676.0 535.0L668.7 533.7M683.7 479.3L674.0 476.9M669.1 504.8L678.5 499.0M682.0 468.0L682.1 469.6M667.7 510.4L669.1 504.8M668.7 533.7L663.3 531.2M670.9 482.3L672.0 496.3M673.2 516.0L668.6 523.7M664.8 514.1L669.7 515.0M678.5 499.0L672.0 496.3M665.8 462.9L667.4 461.6M655.5 499.2L660.1 496.3M676.0 535.0L674.6 531.8M688.0 522.0L684.7 495.4M686.0 483.2L682.1 469.6M682.0 468.0L681.5 469.2M667.7 510.4L666.3 511.4M664.8 514.1L669.6 512.3M665.2 520.8L668.6 523.7M662.0 537.0L663.3 522.9M655.0 505.0L664.7 513.5M688.0 522.0L683.5 523.3M669.6 512.3L669.7 515.0M686.0 483.2L683.5 484.0M670.0 457.0L671.6 465.5M659.0 460.0L667.4 461.6M671.6 465.5L658.3 473.3M681.1 472.5L674.0 476.9M683.5 484.0L681.0 488.9M658.3 473.3L674.0 476.9M665.6 501.3L669.1 504.8M663.3 522.9L668.6 523.7M668.7 533.7L668.6 523.7M688.0 522.0L673.2 516.0M664.8 514.1L666.3 511.4M676.0 535.0L662.0 537.0M665.6 501.3L666.3 511.4M677.8 524.8L674.6 531.8M665.6 501.3L672.0 496.3M670.0 457.0L682.0 468.0M650.0 480.0L662.4 489.2M686.0 483.2L683.7 479.3M669.6 512.3L669.1 504.8M681.1 472.5L671.6 465.5M682.0 468.0L686.0 483.2M650.0 480.0L658.3 473.3M662.4 489.2L672.0 496.3M681.5 469.2L671.6 465.5M664.8 514.1L663.3 522.9M683.7 479.3L683.5 484.0M681.0 488.9L672.0 496.3M662.0 537.0L663.3 531.2M673.2 516.0L678.5 499.0M674.6 531.8L673.4 527.9M665.8 462.9L658.3 473.3M682.0 468.0L689.0 490.0M669.6 512.3L666.3 511.4M689.0 490.0L681.0 488.9M683.5 484.0L674.0 476.9M669.1 504.8L672.0 496.3M673.4 527.9L668.6 523.7M663.3 531.2L663.3 522.9M650.0 480.0L663.6 486.3M665.6 501.3L660.1 496.3M689.0 490.0L688.0 522.0M673.9 532.3L668.7 533.7M670.0 457.0L669.3 461.0M655.0 505.0L666.3 511.4M659.0 460.0L650.0 480.0M676.0 535.0L683.5 523.3M662.4 489.2L660.1 496.3M681.1 472.5L682.1 469.6M659.0 460.0L658.3 473.3M681.5 469.2L682.1 469.6M670.0 457.0L667.4 461.6M681.0 488.9L670.9 482.3M688.0 522.0L676.0 535.0M673.2 516.0L669.7 515.0M660.1 496.3L672.0 496.3M655.0 505.0L663.3 522.9M659.0 460.0L670.0 457.0M665.2 520.8L664.8 514.1M681.1 472.5L681.5 469.2M684.7 495.4L678.5 499.0M650.0 480.0L655.5 499.2M677.8 524.8L673.4 527.9M663.6 486.3L672.0 496.3M663.3 531.2L668.6 523.7M662.0 537.0L655.0 505.0M662.0 537.0L668.7 533.7M655.0 505.0L665.6 501.3M673.2 516.0L669.6 512.3M665.2 520.8L669.7 515.0M668.7 533.7L673.4 527.9M671.6 465.5L674.0 476.9M664.7 513.5L663.3 522.9M683.5 523.3L673.2 516.0M689.0 490.0L684.7 495.4M659.0 460.0L665.8 462.9M662.4 489.2L663.6 486.3M688.0 522.0L678.5 499.0M655.0 505.0L650.0 480.0M659 460L670 457L682 468L689 490L688 522L676 535L662 537L655 505L650 480Z" stroke="#00ffff" stroke-width="0.9" fill="none"/><path d="M662.0 597.4L659.4 593.9M665.4 574.4L659.9 560.8M662.0 555.4L666.7 557.8M676.8 586.8L676.3 579.9M681.0 560.0L676.3 579.9M662.0 555.4L661.8 560.5M661.0 537.0L660.0 560.0M676.0 535.0L676.1 550.8M659.9 560.8L661.8 560.5M664.1 565.8L665.4 574.4M664.6 562.9L662.6 561.3M661.0 537.0L662.0 555.4M664.1 565.8L659.9 560.8M669.6 559.4L669.5 550.7M671.3 563.5L679.9 561.4M676.1 550.8L670.2 541.6M670.2 541.6L669.5 550.7M666.5 546.1L663.0 538.9M683.0 598.0L676.4 595.2M666.7 557.8L669.5 550.7M672.9 593.1L666.7 594.9M683.0 598.0L676.8 586.8M657.0 598.0L658.8 593.6M669.6 559.4L666.7 557.8M676.0 535.0L663.8 537.9M661.0 537.0L663.0 538.9M674.6 566.6L671.3 563.5M659.6 588.8L667.3 584.2M664.1 565.8L662.6 561.3M666.7 557.8L661.8 560.5M659.6 588.8L666.7 594.9M660.0 560.0L662.0 555.4M664.6 562.9L664.1 565.8M683.0 598.0L680.2 594.8M671.3 563.5L664.1 565.8M669.6 559.4L671.1 562.9M679.9 561.4L676.3 579.9M674.6 566.6L665.4 574.4M667.3 584.2L665.4 574.4M676.4 595.2L672.6 596.8M659.4 593.9L666.7 594.9M662.6 561.3L666.7 557.8M674.9 550.7L670.2 541.6M662.6 561.3L661.8 560.5M662.0 555.4L663.0 538.9M672.6 596.8L672.9 593.1M667.3 584.2L676.8 586.8M657.0 598.0L659.6 588.8M669.6 559.4L674.8 551.4M681.0 560.0L676.1 550.8M659.4 593.9L658.8 593.6M676.0 535.0L670.2 541.6M674.9 550.7L669.5 550.7M683.0 598.0L662.0 597.4M671.4 577.4L665.4 574.4M672.6 596.8L666.7 594.9M662.0 597.4L666.7 594.9M674.6 566.6L679.9 561.4M657.0 598.0L659.9 560.8M669.6 559.4L679.9 561.4M662.6 561.3L659.9 560.8M663.8 537.9L663.0 538.9M681.0 560.0L674.8 551.4M666.5 546.1L670.2 541.6M657.0 598.0L659.4 593.9M676.0 535.0L681.0 560.0M659.6 588.8L658.8 593.6M676.4 595.2L676.8 586.8M683.0 598.0L676.3 579.9M681.0 560.0L679.9 561.4M674.6 566.6L664.1 565.8M672.9 593.1L676.8 586.8M666.5 546.1L669.5 550.7M681.0 560.0L683.0 598.0M659.4 593.9L659.6 588.8M674.9 550.7L676.1 550.8M679.9 561.4L671.1 562.9M663.8 537.9L670.2 541.6M664.6 562.9L669.6 559.4M660.0 560.0L661.8 560.5M676.4 595.2L680.2 594.8M661.0 537.0L659.9 560.8M671.4 577.4L674.6 566.6M683.0 598.0L657.0 598.0M662.0 597.4L672.6 596.8M674.8 551.4L669.5 550.7M671.4 577.4L676.3 579.9M676.4 595.2L672.9 593.1M664.6 562.9L666.7 557.8M674.9 550.7L674.8 551.4M671.4 577.4L667.3 584.2M676.1 550.8L674.8 551.4M661.0 537.0L676.0 535.0M664.6 562.9L671.3 563.5M661.0 537.0L663.8 537.9M667.3 584.2L676.3 579.9M674.6 566.6L676.3 579.9M679.9 561.4L674.8 551.4M660.0 560.0L659.9 560.8M664.6 562.9L671.1 562.9M662.0 555.4L666.5 546.1M671.3 563.5L671.1 562.9M670.2 541.6L663.0 538.9M657.0 598.0L662.0 597.4M672.9 593.1L667.3 584.2M676.8 586.8L680.2 594.8M662.0 555.4L669.5 550.7M659.6 588.8L665.4 574.4M683.0 598.0L672.6 596.8M659.6 588.8L659.9 560.8M667.3 584.2L666.7 594.9M661 537L676 535L681 560L683 598L657 598L660 560Z" stroke="#00ffff" stroke-width="0.9" fill="none"/></g></svg>
<div style="position:absolute;left:606.5px;top:396.49px;font-size:11px;line-height:11px;color:#10d010;white-space:pre;letter-spacing:0.13px">info_player_start</div>
<div style="position:absolute;left:643px;top:433.19px;font-size:11px;line-height:11px;color:#ff40ff;white-space:pre;letter-spacing:-0.5px;opacity:0.9">light_fog_controller</div>
<div style="position:absolute;left:641.5px;top:433.19px;font-size:11px;line-height:11px;color:#e8e8e8;white-space:pre;letter-spacing:0.1px">env_fog_controller</div>
<div style="position:absolute;left:782px;top:372px;width:15px;height:226px;background:#f0f0f0"></div>
<div style="position:absolute;left:783px;top:478px;width:13px;height:15px;background:#cdcdcd"></div>
<svg style="position:absolute;left:0;top:0" width="1192" height="637" viewBox="0 0 1192 637"><path d="M786.5 381.5 L789.5 378.5 L792.5 381.5" fill="none" stroke="#505050" stroke-width="1.7"/><path d="M786.5 589.5 L789.5 592.5 L792.5 589.5" fill="none" stroke="#505050" stroke-width="1.7"/></svg>
<div style="position:absolute;left:431px;top:598px;width:351px;height:15px;background:#f0f0f0"></div>
<div style="position:absolute;left:604px;top:599px;width:15px;height:13px;background:#cdcdcd"></div>
<svg style="position:absolute;left:0;top:0" width="1192" height="637" viewBox="0 0 1192 637"><path d="M440.5 602.5 L437.5 605.5 L440.5 608.5" fill="none" stroke="#505050" stroke-width="1.7"/><path d="M772.5 602.5 L775.5 605.5 L772.5 608.5" fill="none" stroke="#505050" stroke-width="1.7"/></svg>
<div style="position:absolute;left:782px;top:598px;width:15px;height:15px;background:#f0f0f0"></div>
<div style="position:absolute;left:797px;top:61px;width:132px;height:435px;background:#f0f0f0"></div>
<div style="position:absolute;left:928px;top:61px;width:1px;height:435px;background:#a8a8a8"></div>
<div style="position:absolute;left:929px;top:61px;width:1px;height:435px;background:#fff"></div>
<div style="position:absolute;left:797px;top:61px;width:132px;height:5px;background:#fff"></div>
<div style="position:absolute;left:798px;top:66px;width:131px;height:1px;background:#a8a8a8"></div>
<div style="position:absolute;left:798px;top:67px;width:131px;height:1px;background:#fff"></div>
<div style="position:absolute;left:797px;top:61px;width:1px;height:435px;background:#fff"></div>
<div style="position:absolute;left:806.5px;top:77.68px;font-size:10.3px;line-height:10.3px;color:#000;white-space:pre;transform:scaleX(0.88);transform-origin:0 0;">Select:</div>
<div style="position:absolute;left:806px;top:91px;width:116px;height:14.5px;background:#f0f0f0;border-top:1px solid #fff;border-left:1px solid #fff;border-right:2px solid #6e6e6e;border-bottom:2px solid #6e6e6e"></div>
<div style="position:absolute;left:806px;top:91px;width:116px;height:14.5px;font-size:10.23px;line-height:14.5px;text-align:center;color:#000;white-space:pre"><span style="display:inline-block;transform:scaleX(0.88)">Groups</span></div>
<div style="position:absolute;left:806px;top:111.5px;width:116px;height:14px;background:#f8f8f8;border-top:2px solid #6e6e6e;border-left:2px solid #6e6e6e;border-right:1px solid #fff;border-bottom:1px solid #fff"></div>
<div style="position:absolute;left:806px;top:111.5px;width:116px;height:14px;font-size:10.23px;line-height:14px;text-align:center;color:#000;white-space:pre"><span style="display:inline-block;transform:scaleX(0.88)">Objects</span></div>
<div style="position:absolute;left:806px;top:132px;width:116px;height:14.5px;background:#f0f0f0;border-top:1px solid #fff;border-left:1px solid #fff;border-right:2px solid #6e6e6e;border-bottom:2px solid #6e6e6e"></div>
<div style="position:absolute;left:806px;top:132px;width:116px;height:14.5px;font-size:10.23px;line-height:14.5px;text-align:center;color:#000;white-space:pre"><span style="display:inline-block;transform:scaleX(0.88)">Solids</span></div>
<div style="position:absolute;left:798px;top:154px;width:131px;height:1px;background:#a8a8a8"></div>
<div style="position:absolute;left:798px;top:155px;width:131px;height:1px;background:#fff"></div>
<div style="position:absolute;left:802px;top:157.68px;font-size:10.3px;line-height:10.3px;color:#000;white-space:pre;transform:scaleX(0.88);transform-origin:0 0;">Texture group:</div>
<div style="position:absolute;left:806px;top:170px;width:120px;height:16.5px;background:#fff;border-top:2px solid #6e6e6e;border-left:2px solid #6e6e6e;border-right:1px solid #fff;border-bottom:1px solid #fff"></div>
<div style="position:absolute;left:910px;top:172px;width:15px;height:13.5px;background:#f0f0f0;border-top:1px solid #fff;border-left:1px solid #fff;border-right:2px solid #6e6e6e;border-bottom:2px solid #6e6e6e"></div>
<svg style="position:absolute;left:0;top:0" width="1192" height="637" viewBox="0 0 1192 637"><path d="M914 176.25 H921 L917.5 180.25 Z" fill="#000"/></svg>
<div style="position:absolute;left:809.5px;top:173.75px;font-size:10.4px;line-height:10.4px;color:#000;white-space:pre;transform:scaleX(0.9);transform-origin:0 0;">All Textures</div>
<div style="position:absolute;left:802px;top:191.08px;font-size:10.3px;line-height:10.3px;color:#000;white-space:pre;transform:scaleX(0.88);transform-origin:0 0;">Current texture:</div>
<div style="position:absolute;left:806px;top:201.5px;width:120px;height:20px;background:#fff;border-top:2px solid #6e6e6e;border-left:2px solid #6e6e6e;border-right:1px solid #fff;border-bottom:1px solid #fff"></div>
<div style="position:absolute;left:910px;top:203.5px;width:15px;height:17px;background:#f0f0f0;border-top:1px solid #fff;border-left:1px solid #fff;border-right:2px solid #6e6e6e;border-bottom:2px solid #6e6e6e"></div>
<svg style="position:absolute;left:0;top:0" width="1192" height="637" viewBox="0 0 1192 637"><path d="M914 209.5 H921 L917.5 213.5 Z" fill="#000"/></svg>
<div style="position:absolute;left:812.5px;top:208.26px;font-size:9.5px;line-height:9.5px;color:#000;white-space:pre;letter-spacing:-0.05px">nature/snowfloor003a</div>
<svg style="position:absolute;left:806px;top:226px;" width="65" height="70" viewBox="0 0 65 70"><defs><filter id="snw" x="0" y="0" width="100%" height="100%"><feTurbulence type="fractalNoise" baseFrequency="0.28" numOctaves="4" seed="7"/><feColorMatrix values="0 0 0 0 0.5  0 0 0 0 0.56  0 0 0 0 0.58  0 0 0 -4.5 2.35"/><feGaussianBlur stdDeviation="0.5"/></filter></defs><rect width="65" height="70" fill="#e8eeef"/><rect width="65" height="70" filter="url(#snw)" opacity="0.75"/></svg>
<div style="position:absolute;left:875px;top:229.00px;font-size:10.4px;line-height:10.4px;color:#000;white-space:pre;transform:scaleX(0.9);transform-origin:0 0;">512x512</div>
<div style="position:absolute;left:874px;top:252px;width:53px;height:20px;background:#f0f0f0;border-top:1px solid #fff;border-left:1px solid #fff;border-right:2px solid #6e6e6e;border-bottom:2px solid #6e6e6e"></div>
<div style="position:absolute;left:874px;top:252px;width:53px;height:20px;font-size:10.23px;line-height:20px;text-align:center;color:#000;white-space:pre"><span style="display:inline-block;transform:scaleX(0.88)"><u>B</u>rowse...</span></div>
<div style="position:absolute;left:874px;top:277px;width:53px;height:19px;background:#f0f0f0;border-top:1px solid #fff;border-left:1px solid #fff;border-right:2px solid #6e6e6e;border-bottom:2px solid #6e6e6e"></div>
<div style="position:absolute;left:874px;top:277px;width:53px;height:19px;font-size:10.23px;line-height:19px;text-align:center;color:#000;white-space:pre"><span style="display:inline-block;transform:scaleX(0.88)"><u>R</u>eplace...</span></div>
<div style="position:absolute;left:798px;top:301px;width:131px;height:1px;background:#a8a8a8"></div>
<div style="position:absolute;left:798px;top:302px;width:131px;height:1px;background:#fff"></div>
<div style="position:absolute;left:802.5px;top:306.08px;font-size:10.3px;line-height:10.3px;color:#000;white-space:pre;transform:scaleX(0.88);transform-origin:0 0;">VisGroups:</div>
<div style="position:absolute;left:802px;top:335px;width:124px;height:140px;background:#f0f0f0;border-top:1px solid #fff;border-left:1px solid #fff;border-right:2px solid #6e6e6e;border-bottom:2px solid #6e6e6e"></div>
<div style="position:absolute;left:846px;top:320.5px;width:41px;height:15px;background:#f0f0f0;border-top:1px solid #fff;border-left:1px solid #fff;border-right:2px solid #6e6e6e"></div>
<div style="position:absolute;left:802px;top:319px;width:45px;height:17px;background:#f0f0f0;border-top:1px solid #fff;border-left:1px solid #fff;border-right:2px solid #6e6e6e"></div>
<div style="position:absolute;left:808px;top:322.00px;font-size:10.4px;line-height:10.4px;color:#000;white-space:pre;transform:scaleX(0.9);transform-origin:0 0;">User</div>
<div style="position:absolute;left:851px;top:324.00px;font-size:10.4px;line-height:10.4px;color:#000;white-space:pre;transform:scaleX(0.9);transform-origin:0 0;">Auto</div>
<div style="position:absolute;left:804px;top:338px;width:118px;height:132px;background:#fff;border-top:2px solid #6e6e6e;border-left:2px solid #6e6e6e;border-right:1px solid #f0f0f0;border-bottom:1px solid #f0f0f0"></div>
<svg style="position:absolute;left:0;top:0" width="1192" height="637" viewBox="0 0 1192 637"><path d="M812.5 346 V375.5" stroke="#a0a0a0" stroke-dasharray="1 1"/><path d="M813 346.5 H823" stroke="#a0a0a0" stroke-dasharray="1 1"/><rect x="823.5" y="341.0" width="11" height="11" fill="#fff" stroke="#000" stroke-width="1.6"/><path d="M826 346.5 L828.3 349.0 L832.5 344.0" fill="none" stroke="#000" stroke-width="1.6"/><path d="M813 360.8 H823" stroke="#a0a0a0" stroke-dasharray="1 1"/><rect x="823.5" y="355.3" width="11" height="11" fill="#fff" stroke="#000" stroke-width="1.6"/><path d="M826 360.8 L828.3 363.3 L832.5 358.3" fill="none" stroke="#000" stroke-width="1.6"/><path d="M813 375.1 H823" stroke="#a0a0a0" stroke-dasharray="1 1"/><rect x="823.5" y="369.6" width="11" height="11" fill="#fff" stroke="#000" stroke-width="1.6"/><path d="M826 375.1 L828.3 377.6 L832.5 372.6" fill="none" stroke="#000" stroke-width="1.6"/></svg>
<div style="position:absolute;left:841px;top:341.38px;font-size:10.3px;line-height:10.3px;color:#000;white-space:pre;transform:scaleX(0.88);transform-origin:0 0;">structure01</div>
<div style="position:absolute;left:841px;top:355.68px;font-size:10.3px;line-height:10.3px;color:#000;white-space:pre;transform:scaleX(0.88);transform-origin:0 0;">tower</div>
<div style="position:absolute;left:841px;top:369.98px;font-size:10.3px;line-height:10.3px;color:#000;white-space:pre;transform:scaleX(0.88);transform-origin:0 0;">top_house</div>
<div style="position:absolute;left:799px;top:478px;width:31px;height:16.5px;background:#f0f0f0;border-top:1px solid #fff;border-left:1px solid #fff;border-right:2px solid #6e6e6e;border-bottom:2px solid #6e6e6e"></div>
<div style="position:absolute;left:799px;top:478px;width:31px;height:16.5px;font-size:10.23px;line-height:16.5px;text-align:center;color:#000;white-space:pre"><span style="display:inline-block;transform:scaleX(0.88)"><u>S</u>how</span></div>
<div style="position:absolute;left:831px;top:478px;width:31px;height:16.5px;background:#f0f0f0;border-top:1px solid #fff;border-left:1px solid #fff;border-right:2px solid #6e6e6e;border-bottom:2px solid #6e6e6e"></div>
<div style="position:absolute;left:831px;top:478px;width:31px;height:16.5px;font-size:10.23px;line-height:16.5px;text-align:center;color:#000;white-space:pre"><span style="display:inline-block;transform:scaleX(0.88)"><u>E</u>dit</span></div>
<div style="position:absolute;left:864px;top:478px;width:31px;height:16.5px;background:#f0f0f0;border-top:1px solid #fff;border-left:1px solid #fff;border-right:2px solid #6e6e6e;border-bottom:2px solid #6e6e6e"></div>
<div style="position:absolute;left:864px;top:478px;width:31px;height:16.5px;font-size:10.23px;line-height:16.5px;text-align:center;color:#000;white-space:pre"><span style="display:inline-block;transform:scaleX(0.88)"><u>M</u>ark</span></div>
<div style="position:absolute;left:898px;top:478px;width:15px;height:16.5px;background:#f0f0f0;border-top:1px solid #fff;border-left:1px solid #fff;border-right:2px solid #6e6e6e;border-bottom:2px solid #6e6e6e"></div>
<div style="position:absolute;left:914px;top:478px;width:15px;height:16.5px;background:#f0f0f0;border-top:1px solid #fff;border-left:1px solid #fff;border-right:2px solid #6e6e6e;border-bottom:2px solid #6e6e6e"></div>
<svg style="position:absolute;left:0;top:0" width="1192" height="637" viewBox="0 0 1192 637"><path d="M905.5 481 L901.5 485.5 H904.3 V491 H906.7 V485.5 H909.5 Z" fill="#000"/><path d="M921 491.5 L917 487 H919.8 V481.5 H922.2 V487 H925 Z" fill="#000"/></svg>
<div style="position:absolute;left:930px;top:61px;width:130px;height:144px;background:#f0f0f0"></div>
<div style="position:absolute;left:930px;top:204px;width:130px;height:1px;background:#a8a8a8"></div>
<div style="position:absolute;left:1060px;top:61px;width:1px;height:144px;background:#a8a8a8"></div>
<div style="position:absolute;left:933px;top:64.08px;font-size:10.3px;line-height:10.3px;color:#000;white-space:pre;transform:scaleX(0.88);transform-origin:0 0;">Move</div>
<div style="position:absolute;left:933px;top:75.48px;font-size:10.3px;line-height:10.3px;color:#000;white-space:pre;transform:scaleX(0.88);transform-origin:0 0;">selected:</div>
<div style="position:absolute;left:973px;top:64.5px;width:42px;height:19.5px;background:#f0f0f0;border-top:1px solid #fff;border-left:1px solid #fff;border-right:2px solid #6e6e6e;border-bottom:2px solid #6e6e6e"></div>
<div style="position:absolute;left:973px;top:64.5px;width:42px;height:19.5px;font-size:10.23px;line-height:19.5px;text-align:center;color:#a8a8a8;white-space:pre"><span style="display:inline-block;transform:scaleX(0.88)">to<u>W</u>orld</span></div>
<div style="position:absolute;left:1016px;top:64.5px;width:42px;height:19.5px;background:#f0f0f0;border-top:1px solid #fff;border-left:1px solid #fff;border-right:2px solid #6e6e6e;border-bottom:2px solid #6e6e6e"></div>
<div style="position:absolute;left:1016px;top:64.5px;width:42px;height:19.5px;font-size:10.23px;line-height:19.5px;text-align:center;color:#a8a8a8;white-space:pre"><span style="display:inline-block;transform:scaleX(0.88)">to<u>E</u>ntity</span></div>
<div style="position:absolute;left:933px;top:91.28px;font-size:10.3px;line-height:10.3px;color:#000;white-space:pre;transform:scaleX(0.88);transform-origin:0 0;"><u>C</u>ategories:</div>
<div style="position:absolute;left:932.5px;top:103.5px;width:123px;height:16.5px;background:#f0f0f0;border-top:2px solid #6e6e6e;border-left:2px solid #6e6e6e;border-right:1px solid #fff;border-bottom:1px solid #fff"></div>
<div style="position:absolute;left:1039.5px;top:105.5px;width:15px;height:13.5px;background:#f0f0f0;border-top:1px solid #fff;border-left:1px solid #fff;border-right:2px solid #6e6e6e;border-bottom:2px solid #6e6e6e"></div>
<svg style="position:absolute;left:0;top:0" width="1192" height="637" viewBox="0 0 1192 637"><path d="M1044.0 110.75 H1050.0 L1047.0 113.75 Z" fill="#a0a0a0"/></svg>
<div style="position:absolute;left:933px;top:124.88px;font-size:10.3px;line-height:10.3px;color:#000;white-space:pre;transform:scaleX(0.88);transform-origin:0 0;"><u>O</u>bjects:</div>
<div style="position:absolute;left:932.5px;top:138px;width:123px;height:17.5px;background:#f0f0f0;border-top:2px solid #6e6e6e;border-left:2px solid #6e6e6e;border-right:1px solid #fff;border-bottom:1px solid #fff"></div>
<div style="position:absolute;left:1039.5px;top:140px;width:15px;height:14.5px;background:#f0f0f0;border-top:1px solid #fff;border-left:1px solid #fff;border-right:2px solid #6e6e6e;border-bottom:2px solid #6e6e6e"></div>
<svg style="position:absolute;left:0;top:0" width="1192" height="637" viewBox="0 0 1192 637"><path d="M1044.0 145.75 H1050.0 L1047.0 148.75 Z" fill="#a0a0a0"/></svg>
<div style="position:absolute;left:968px;top:159.5px;width:29px;height:20px;background:#f0f0f0;border-top:2px solid #6e6e6e;border-left:2px solid #6e6e6e;border-right:1px solid #fff;border-bottom:1px solid #fff"></div>
<div style="position:absolute;left:971.5px;top:166.26px;font-size:9.5px;line-height:9.5px;color:#a0a0a0;white-space:pre;">0</div>
<div style="position:absolute;left:998px;top:159.5px;width:14.5px;height:10px;background:#f0f0f0;border-top:1px solid #fff;border-left:1px solid #fff;border-right:2px solid #6e6e6e;border-bottom:2px solid #6e6e6e"></div>
<div style="position:absolute;left:998px;top:169.5px;width:14.5px;height:10px;background:#f0f0f0;border-top:1px solid #fff;border-left:1px solid #fff;border-right:2px solid #6e6e6e;border-bottom:2px solid #6e6e6e"></div>
<svg style="position:absolute;left:0;top:0" width="1192" height="637" viewBox="0 0 1192 637"><path d="M1003.5 165.5 L1005.3 163.5 L1007 165.5 Z M1003.5 173.5 L1005.3 175.5 L1007 173.5 Z" fill="#a0a0a0"/></svg>
<div style="position:absolute;left:948px;top:181.5px;width:94px;height:20px;background:#f0f0f0;border-top:1px solid #fff;border-left:1px solid #fff;border-right:2px solid #6e6e6e;border-bottom:2px solid #6e6e6e"></div>
<div style="position:absolute;left:948px;top:181.5px;width:94px;height:20px;font-size:10.23px;line-height:20px;text-align:center;color:#000;white-space:pre"><span style="display:inline-block;transform:scaleX(0.88)"><u>C</u>reate Prefab</span></div>
<div style="position:absolute;left:1060px;top:61px;width:132px;height:193px;background:#f0f0f0"></div>
<div style="position:absolute;left:1066px;top:64.08px;font-size:10.3px;line-height:10.3px;color:#000;white-space:pre;transform:scaleX(0.88);transform-origin:0 0;">Manifest:</div>
<div style="position:absolute;left:1061px;top:76px;width:131px;height:178px;background:#f0f0f0;border-top:2px solid #6e6e6e;border-left:2px solid #6e6e6e"></div>
<div style="position:absolute;left:797px;top:613px;width:395px;height:1px;background:#a0a0a0"></div>
<div style="position:absolute;left:0px;top:614px;width:1192px;height:18px;background:#f0f0f0"></div>
<div style="position:absolute;left:0px;top:614px;width:1192px;height:2px;background:#fff"></div>
<div style="position:absolute;left:2.5px;top:619.70px;font-size:9.8px;line-height:9.8px;color:#000;white-space:pre;">For Help, press F1</div>
<div style="position:absolute;left:414px;top:616px;width:268px;height:15px;border-top:1px solid #a0a0a0;border-left:1px solid #a0a0a0;border-right:1px solid #fff;border-bottom:1px solid #fff"></div>
<div style="position:absolute;left:683px;top:616px;width:93px;height:15px;border-top:1px solid #a0a0a0;border-left:1px solid #a0a0a0;border-right:1px solid #fff;border-bottom:1px solid #fff"></div>
<div style="position:absolute;left:777px;top:616px;width:164px;height:15px;border-top:1px solid #a0a0a0;border-left:1px solid #a0a0a0;border-right:1px solid #fff;border-bottom:1px solid #fff"></div>
<div style="position:absolute;left:942px;top:616px;width:75px;height:15px;border-top:1px solid #a0a0a0;border-left:1px solid #a0a0a0;border-right:1px solid #fff;border-bottom:1px solid #fff"></div>
<div style="position:absolute;left:1018px;top:616px;width:124px;height:15px;border-top:1px solid #a0a0a0;border-left:1px solid #a0a0a0;border-right:1px solid #fff;border-bottom:1px solid #fff"></div>
<div style="position:absolute;left:1143px;top:616px;width:49px;height:15px;border-top:1px solid #a0a0a0;border-left:1px solid #a0a0a0;border-right:1px solid #fff;border-bottom:1px solid #fff"></div>
<div style="position:absolute;left:416px;top:619.70px;font-size:9.8px;line-height:9.8px;color:#000;white-space:pre;">no selection.</div>
<div style="position:absolute;left:782px;top:619.70px;font-size:9.8px;line-height:9.8px;color:#000;white-space:pre;">0w 0l 0h @(0 0 0)</div>
<div style="position:absolute;left:1022.5px;top:619.70px;font-size:9.8px;line-height:9.8px;color:#000;white-space:pre;">Snap: On Grid: 8</div>
<div style="position:absolute;left:1145px;top:619.70px;font-size:9.8px;line-height:9.8px;color:#000;white-space:pre;">&lt;-&gt;</div>
<div style="position:absolute;left:0px;top:632px;width:1192px;height:5px;background:#000"></div>
<div style="position:absolute;left:7px;top:633px;width:167px;height:4px;background:#2a2a2a"></div>
<div style="position:absolute;left:428px;top:633px;width:42px;height:4px;background:#2a2a2a"></div>
</body></html>
